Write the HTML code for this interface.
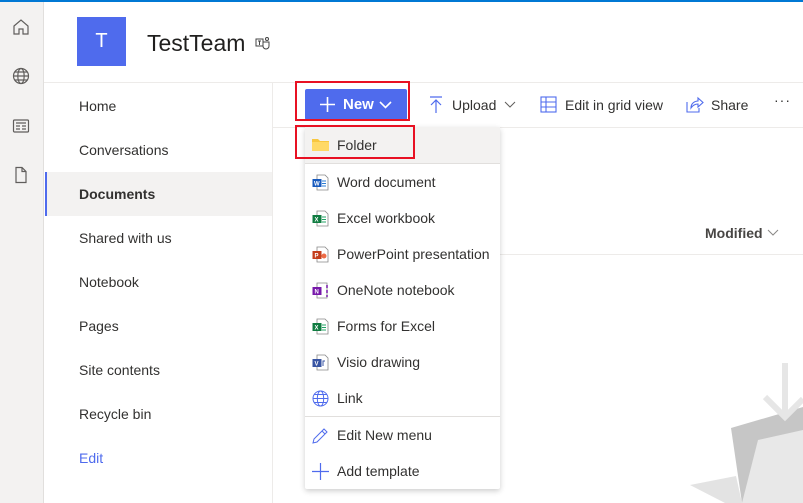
<!DOCTYPE html>
<html><head><meta charset="utf-8"><style>
*{margin:0;padding:0;box-sizing:border-box}
body{width:803px;height:503px;overflow:hidden;position:relative;background:#fff;font-family:"Liberation Sans",sans-serif;color:#323130}
.abs{position:absolute}
.nav{position:absolute;left:79px;font-size:14px;color:#323130}
.mi{position:absolute;left:337px;font-size:14px;color:#323130}
.ic{position:absolute;left:312px}
</style></head><body>
<div class="abs" style="left:0;top:0;width:803px;height:2px;background:#0078d4"></div>
<div class="abs" style="left:0;top:2px;width:44px;height:501px;background:#f3f2f1;border-right:1px solid #e1dfdd"></div>
<svg class="abs" style="left:11px;top:17px" width="20" height="20" viewBox="0 0 20 20" fill="none" stroke="#605e5c" stroke-width="1.2"><path d="M3 9 L10 3 L17 9 V17 H12 V12 H8 V17 H3 Z"/></svg>
<svg class="abs" style="left:11px;top:66px" width="20" height="20" viewBox="0 0 20 20" fill="none" stroke="#605e5c" stroke-width="1.2"><circle cx="10" cy="10" r="7.5"/><ellipse cx="10" cy="10" rx="3.2" ry="7.5"/><path d="M2.5 10H17.5M4 6H16M4 14H16"/></svg>
<svg class="abs" style="left:11px;top:116px" width="20" height="20" viewBox="0 0 20 20" fill="none" stroke="#605e5c" stroke-width="1.2"><rect x="2.5" y="4" width="15" height="12" rx="1"/><path d="M5 7H15M5 10H9M5 13H9M11 10H15M11 13H15"/></svg>
<svg class="abs" style="left:11px;top:165px" width="20" height="20" viewBox="0 0 20 20" fill="none" stroke="#605e5c" stroke-width="1.2"><path d="M5 2.5H11L15 6.5V17.5H5Z M11 2.5V6.5H15"/></svg>

<div class="abs" style="left:77px;top:17px;width:49px;height:49px;background:#4f6bed;color:#fff;font-size:20px;text-align:center;line-height:49px">T</div>
<div class="abs" style="left:147px;top:30px;font-size:23px;color:#201f1e">TestTeam</div>
<svg class="abs" style="left:255px;top:36px" width="16" height="14" viewBox="0 0 16 14" fill="none" stroke="#444" stroke-width="1"><rect x="1" y="3" width="7" height="7"/><path d="M3 5H6M4.5 5V9"/><circle cx="12" cy="3" r="1.5"/><path d="M8 6H14V10A3 3 0 0 1 8 10"/></svg>
<div class="abs" style="left:44px;top:82px;width:759px;height:1px;background:#edebe9"></div>
<div class="abs" style="left:272px;top:83px;width:1px;height:420px;background:#edebe9"></div>
<div class="abs" style="left:45px;top:172px;width:227px;height:44px;background:#f3f2f1"></div>
<div class="abs" style="left:45px;top:172px;width:2px;height:44px;background:#4f6bed"></div>
<div class="nav" style="top:98px">Home</div>
<div class="nav" style="top:142px">Conversations</div>
<div class="nav" style="top:186px;font-weight:bold">Documents</div>
<div class="nav" style="top:230px">Shared with us</div>
<div class="nav" style="top:274px">Notebook</div>
<div class="nav" style="top:318px">Pages</div>
<div class="nav" style="top:362px">Site contents</div>
<div class="nav" style="top:406px">Recycle bin</div>
<div class="nav" style="top:450px;color:#4f6bed">Edit</div>

<div class="abs" style="left:273px;top:127px;width:530px;height:1px;background:#edebe9"></div>
<div class="abs" style="left:305px;top:89px;width:102px;height:31px;background:#4f6bed;border-radius:2px"></div>
<svg class="abs" style="left:320px;top:97px" width="15" height="15" viewBox="0 0 15 15" stroke="#fff" stroke-width="1.6"><path d="M7.5 0V15M0 7.5H15"/></svg>
<div class="abs" style="left:343px;top:96px;font-size:15px;font-weight:bold;color:#fff">New</div>
<svg class="abs" style="left:379px;top:101px" width="13" height="8" viewBox="0 0 13 8" fill="none" stroke="#fff" stroke-width="1.6"><path d="M1 1L6.5 6.5L12 1"/></svg>
<div class="abs" style="left:295px;top:81px;width:115px;height:40px;border:2px solid #e81123"></div>
<svg class="abs" style="left:429px;top:96px" width="14" height="18" viewBox="0 0 14 18" fill="none" stroke="#4f6bed" stroke-width="1.2"><path d="M1 1H13M7 4V17M2 9L7 4L12 9"/></svg>
<div class="abs" style="left:452px;top:97px;font-size:14px">Upload</div>
<svg class="abs" style="left:504px;top:101px" width="12" height="7" viewBox="0 0 12 7" fill="none" stroke="#605e5c"><path d="M1 1L6 6L11 1"/></svg>
<svg class="abs" style="left:540px;top:96px" width="17" height="17" viewBox="0 0 17 17" fill="none" stroke="#4f6bed" stroke-width="1.1"><rect x="1" y="1" width="15" height="15"/><path d="M1 6H16M1 11H16M6 1V16"/></svg>
<div class="abs" style="left:565px;top:97px;font-size:14px">Edit in grid view</div>
<svg class="abs" style="left:686px;top:96px" width="18" height="17" viewBox="0 0 18 17" fill="none" stroke="#4f6bed" stroke-width="1.1"><path d="M1 6V16H13V12M5 12C5 7 9 5 12 5V2L17 6.5L12 11V8C9 8 7 9 5 12Z"/></svg>
<div class="abs" style="left:711px;top:97px;font-size:14px">Share</div>
<div class="abs" style="left:774px;top:92px;font-size:14px;letter-spacing:1px">···</div>

<div class="abs" style="left:500px;top:254px;width:303px;height:1px;background:#edebe9"></div>
<div class="abs" style="left:705px;top:225px;font-size:14px;font-weight:bold;color:#484644">Modified</div>
<svg class="abs" style="left:767px;top:229px" width="12" height="7" viewBox="0 0 12 7" fill="none" stroke="#8a8886"><path d="M1 1L6 6L11 1"/></svg>

<svg class="abs" style="left:690px;top:360px" width="113" height="143" viewBox="0 0 113 143"><path d="M0 125L46 116L52 143H35Z" fill="#e3e3e3"/><path d="M41 68L113 47V143H52Z" fill="#c6c6c6"/><path d="M68 80L113 70V143H52Z" fill="#e8e8e8"/><path d="M95 3V56M75 37L95 57L113 39" stroke="#e6e6e6" stroke-width="6" fill="none"/></svg>

<div class="abs" style="left:305px;top:127px;width:195px;height:362px;background:#fff;box-shadow:0 2px 6px rgba(0,0,0,.2);border-radius:2px"></div>
<div class="abs" style="left:305px;top:127px;width:195px;height:36px;background:#f3f2f1"></div>
<div class="abs" style="left:305px;top:163px;width:195px;height:1px;background:#e1dfdd"></div>
<div class="abs" style="left:305px;top:416px;width:195px;height:1px;background:#e1dfdd"></div>
<div class="abs" style="left:295px;top:125px;width:120px;height:34px;border:2px solid #e81123"></div>
<svg class="ic" style="top:138px" width="17" height="14" viewBox="0 0 17 14"><path d="M0 1H6L8 3H17V13H0Z" fill="#f8c740"/><path d="M0 4H17V13H0Z" fill="#ffd966"/></svg>
<div class="mi" style="top:137px">Folder</div>
<svg class="ic" style="top:174px" width="17" height="17" viewBox="0 0 17 17"><path d="M5 1H13L16 4V16H5Z" fill="#fff" stroke="#888" stroke-width=".8"/><path d="M10 7H14M10 9.5H14M10 12H14" stroke="#2b7cd3"/><rect x="0.5" y="5" width="9" height="8" fill="#185abd"/><text x="2" y="11.5" font-size="6" fill="#fff" font-family="Liberation Sans" font-weight="bold">W</text></svg>
<div class="mi" style="top:174px">Word document</div>
<svg class="ic" style="top:210px" width="17" height="17" viewBox="0 0 17 17"><path d="M5 1H13L16 4V16H5Z" fill="#fff" stroke="#888" stroke-width=".8"/><path d="M10 7H14M10 9.5H14M10 12H14" stroke="#21a366"/><rect x="0.5" y="5" width="9" height="8" fill="#107c41"/><text x="2.5" y="11.5" font-size="6" fill="#fff" font-family="Liberation Sans" font-weight="bold">X</text></svg>
<div class="mi" style="top:210px">Excel workbook</div>
<svg class="ic" style="top:246px" width="17" height="17" viewBox="0 0 17 17"><path d="M5 1H13L16 4V16H5Z" fill="#fff" stroke="#888" stroke-width=".8"/><circle cx="12" cy="10" r="2.5" fill="#ed6c47"/><rect x="0.5" y="5" width="9" height="8" fill="#c43e1c"/><text x="2.5" y="11.5" font-size="6" fill="#fff" font-family="Liberation Sans" font-weight="bold">P</text></svg>
<div class="mi" style="top:246px">PowerPoint presentation</div>
<svg class="ic" style="top:282px" width="17" height="17" viewBox="0 0 17 17"><path d="M5 1H15V16H5Z" fill="#fff" stroke="#888" stroke-width=".8"/><path d="M15 3V6M15 8V11M15 13V15" stroke="#7719aa" stroke-width="1.5"/><rect x="0.5" y="5" width="9" height="8" fill="#7719aa"/><text x="2.5" y="11.5" font-size="6" fill="#fff" font-family="Liberation Sans" font-weight="bold">N</text></svg>
<div class="mi" style="top:282px">OneNote notebook</div>
<svg class="ic" style="top:318px" width="17" height="17" viewBox="0 0 17 17"><path d="M5 1H13L16 4V16H5Z" fill="#fff" stroke="#888" stroke-width=".8"/><path d="M10 7H14M10 9.5H14M10 12H14" stroke="#21a366"/><rect x="0.5" y="5" width="9" height="8" fill="#107c41"/><text x="2.5" y="11.5" font-size="6" fill="#fff" font-family="Liberation Sans" font-weight="bold">X</text></svg>
<div class="mi" style="top:318px">Forms for Excel</div>
<svg class="ic" style="top:354px" width="17" height="17" viewBox="0 0 17 17"><path d="M5 1H13L16 4V16H5Z" fill="#fff" stroke="#888" stroke-width=".8"/><path d="M11 12V7H13" stroke="#3955a3" fill="none"/><rect x="0.5" y="5" width="9" height="8" fill="#3955a3"/><text x="2.5" y="11.5" font-size="6" fill="#fff" font-family="Liberation Sans" font-weight="bold">V</text></svg>
<div class="mi" style="top:354px">Visio drawing</div>
<svg class="ic" style="top:390px" width="17" height="17" viewBox="0 0 17 17" fill="none" stroke="#4f6bed" stroke-width="1"><circle cx="8.5" cy="8.5" r="7.5"/><ellipse cx="8.5" cy="8.5" rx="3.2" ry="7.5"/><path d="M1 8.5H16M2.5 4.5H14.5M2.5 12.5H14.5"/></svg>
<div class="mi" style="top:390px">Link</div>
<svg class="ic" style="top:427px" width="17" height="17" viewBox="0 0 17 17" fill="none" stroke="#4f6bed" stroke-width="1"><path d="M1 16L2 12L12 2L15 5L5 15Z M10 4L13 7"/></svg>
<div class="mi" style="top:427px">Edit New menu</div>
<svg class="ic" style="top:463px" width="17" height="17" viewBox="0 0 17 17" stroke="#4f6bed" stroke-width="1.2"><path d="M8.5 0V17M0 8.5H17"/></svg>
<div class="mi" style="top:463px">Add template</div>
</body></html>
